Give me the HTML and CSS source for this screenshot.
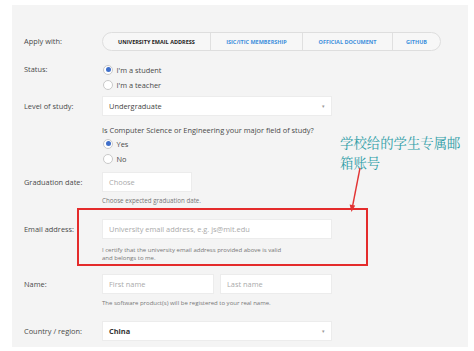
FILE: index.html
```html
<!DOCTYPE html>
<html>
<head>
<meta charset="utf-8">
<link rel="stylesheet" href="styles.css">
</head>
<body>
<div class="panel">
  <div class="row r-tabs">
    <div class="label">Apply with:</div>
    <div class="tabs">
      <div class="tab t1 active">UNIVERSITY EMAIL ADDRESS</div>
      <div class="tab t2">ISIC/ITIC MEMBERSHIP</div>
      <div class="tab t3">OFFICIAL DOCUMENT</div>
      <div class="tab t4">GITHUB</div>
    </div>
  </div>
  <div class="row r-status">
    <div class="label lbl-radio">Status:</div>
    <div class="field">
      <div class="radio-line"><span class="radio on"></span>I'm a student</div>
      <div class="radio-line"><span class="radio"></span>I'm a teacher</div>
    </div>
  </div>
  <div class="row r-level">
    <div class="label">Level of study:</div>
    <div class="field">
      <div class="select wide"><span>Undergraduate</span><span class="caret">▾</span></div>
    </div>
  </div>
  <div class="row r-question">
    <div class="label"></div>
    <div class="field">
      <div class="question">Is Computer Science or Engineering your major field of study?</div>
      <div class="radio-line"><span class="radio on"></span>Yes</div>
      <div class="radio-line"><span class="radio"></span>No</div>
    </div>
  </div>
  <div class="row r-grad">
    <div class="label">Graduation date:</div>
    <div class="field">
      <div class="input short placeholder">Choose</div>
      <div class="help help-grad">Choose expected graduation date.</div>
    </div>
  </div>
  <div class="row r-email">
    <div class="label">Email address:</div>
    <div class="field">
      <div class="input wide placeholder">University email address, e.g. js@mit.edu</div>
      <div class="help certify">I certify that the university email address provided above is valid<br>and belongs to me.</div>
    </div>
  </div>
  <div class="row r-name">
    <div class="label">Name:</div>
    <div class="field">
      <div class="names">
        <div class="input half placeholder">First name</div>
        <div class="input half placeholder">Last name</div>
      </div>
      <div class="help">The software product(s) will be registered to your real name.</div>
    </div>
  </div>
  <div class="row r-country">
    <div class="label">Country / region:</div>
    <div class="field">
      <div class="select wide"><span class="bold">China</span><span class="caret">▾</span></div>
    </div>
  </div>
</div>

<div class="red-box"></div>
<div class="note">学校给的学生专属邮<br>箱账号</div>
<svg class="arrow" width="30" height="50" viewBox="0 0 30 50">
  <line x1="20" y1="2" x2="12.6" y2="40" stroke="#e23333" stroke-width="1.4"/>
  <polygon points="11.5,46 9.6,38.5 15.2,39.6" fill="#e23333"/>
</svg>
</body>
</html>
```

FILE: styles.css
```css
html, body {
  margin: 0;
  padding: 0;
  background: #ffffff;
}
body {
  font-family: "Open Sans", "Noto Sans", sans-serif;
  color: #4a4a4a;
  position: relative;
  width: 474px;
  height: 351px;
  overflow: hidden;
}
.panel {
  margin: 5px 6px 0 12px;
  height: 342px;
  box-sizing: border-box;
  background: #f4f4f4;
  padding: 27px 0 0 12px;
}
.row {
  display: grid;
  grid-template-columns: 78px 1fr;
  align-items: start;
}
.label {
  font-size: 7.4px;
  line-height: 20px;
  color: #4a4a4a;
  white-space: nowrap;
}
.r-tabs .label { line-height: 19px; }
.lbl-radio { line-height: 15px; }
.tabs {
  display: flex;
  width: 339px;
  height: 19px;
  box-sizing: border-box;
  border: 1px solid #dedede;
  border-radius: 10px;
  background: #f7f7f7;
  overflow: hidden;
}
.tab {
  font-size: 5.5px;
  font-weight: 700;
  color: #3d8fdc;
  display: flex;
  align-items: center;
  justify-content: center;
  border-left: 1px solid #e0e0e0;
  white-space: nowrap;
}
.tab.active { color: #222; border-left: none; }
.t1 { width: 107px; }
.t2 { width: 91px; }
.t3 { width: 89px; }
.t4 { flex: 1; }
.r-status { margin-top: 11px; }
.r-level { margin-top: 4px; }
.r-question { margin-top: 8px; }
.r-grad { margin-top: 6px; }
.r-email { margin-top: 14px; }
.r-name { margin-top: 12px; }
.r-country { margin-top: 14px; }
.radio-line {
  display: flex;
  align-items: center;
  height: 15px;
  font-size: 7.4px;
  color: #4a4a4a;
}
.radio {
  width: 8px;
  height: 8px;
  border-radius: 50%;
  border: 1px solid #c9c9c9;
  background: #fff;
  margin: 0 3.5px 0 1px;
  box-sizing: content-box;
  position: relative;
}
.radio.on::after {
  content: "";
  position: absolute;
  left: 1.5px;
  top: 1.5px;
  width: 5px;
  height: 5px;
  border-radius: 50%;
  background: #3f6fca;
}
.question {
  font-size: 7.4px;
  line-height: 12px;
  color: #4a4a4a;
  white-space: nowrap;
}
.select, .input {
  height: 20px;
  box-sizing: border-box;
  background: #fff;
  border: 1px solid #ececec;
  font-size: 7.4px;
  display: flex;
  align-items: center;
  padding: 0 6px;
  color: #444;
  white-space: nowrap;
}
.select { justify-content: space-between; }
.caret { font-size: 5px; color: #999; }
.bold { font-weight: 700; color: #333; }
.wide { width: 230px; }
.short { width: 90px; }
.half { width: 112px; }
.placeholder { color: #aaa; }
.names {
  display: flex;
  gap: 6px;
}
.help {
  font-size: 6px;
  line-height: 8px;
  color: #777;
  margin-top: 5px;
  white-space: nowrap;
}
.help-grad { font-size: 6.2px; }
.certify { margin-top: 7px; }
.red-box {
  position: absolute;
  left: 77px;
  top: 208px;
  width: 291px;
  height: 58px;
  box-sizing: border-box;
  border: 2px solid #e42b2b;
}
.note {
  position: absolute;
  left: 340px;
  top: 133px;
  font-family: "Noto Serif CJK SC", "Noto Sans CJK SC", serif;
  font-size: 13.4px;
  line-height: 20px;
  color: #2f9ea8;
  white-space: nowrap;
}
.arrow {
  position: absolute;
  left: 340px;
  top: 166px;
}
```
